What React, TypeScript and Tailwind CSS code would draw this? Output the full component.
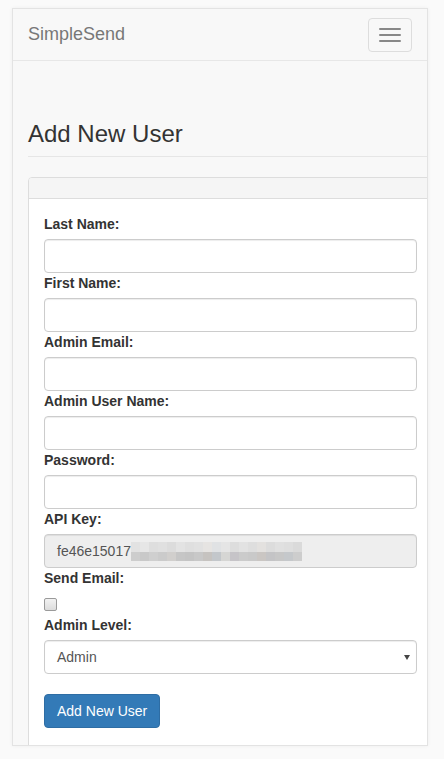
import React from 'react';

const fields = ['Last Name:', 'First Name:', 'Admin Email:', 'Admin User Name:', 'Password:'];

// pixelated (redacted) part of the key
const blurTop = [
  'bg-[#e2e2e2]', 'bg-[#e6e6e6]', 'bg-[#dedede]', 'bg-[#e0e0e0]', 'bg-[#dcdcdc]', 'bg-[#e3e3e3]',
  'bg-[#dfdfdf]', 'bg-[#e1e1e1]', 'bg-[#e6e4e2]', 'bg-[#e0e2e4]', 'bg-[#e5e5e5]', 'bg-[#dddddd]',
  'bg-[#e2e2e2]', 'bg-[#dedede]', 'bg-[#e3e1df]', 'bg-[#dcdcdc]', 'bg-[#e0e0e0]', 'bg-[#dedede]', 'bg-[#dadada]',
];
const blurBottom = [
  'bg-[#cdcdcd]', 'bg-[#c9c9c9]', 'bg-[#cfcfcf]', 'bg-[#cbcbcb]', 'bg-[#d1cfcd]', 'bg-[#c6c6c6]',
  'bg-[#c4c4c4]', 'bg-[#c8c8c8]', 'bg-[#c6c3c0]', 'bg-[#c3c7cb]', 'bg-[#d6d6d4]', 'bg-[#c6c4c8]',
  'bg-[#cbcbcb]', 'bg-[#c9c9c9]', 'bg-[#cac6c3]', 'bg-[#c4c4c6]', 'bg-[#c7c7c7]', 'bg-[#c5c8cb]', 'bg-[#cdcdcd]',
];

const Label: React.FC<{ text: string }> = ({ text }) => (
  <label className="block text-[14px] leading-[20px] font-bold text-[#333] mb-[5px]">{text}</label>
);

const TextInput: React.FC = () => (
  <div className="h-[34px] w-full bg-white border border-[#ccc] rounded-[4px] shadow-[inset_0_1px_1px_rgba(0,0,0,0.075)]" />
);

export default function App() {
  return (
    <div className="min-h-screen bg-[#fafafa] pt-2 pl-3 font-['Liberation_Sans',Arial,sans-serif]">
      <div className="w-[416px] h-[738px] border border-[#e3e3e3] bg-[#f8f8f8] overflow-hidden shadow-[0_0_4px_rgba(0,0,0,0.05)]">
        {/* Navbar */}
        <div className="h-[52px] border-b border-[#e7e7e7] flex items-center justify-between pl-[15px] pr-[15px]">
          <span className="text-[18px] text-[#777]">SimpleSend</span>
          <button className="w-[44px] h-[34px] border border-[#ddd] rounded-[4px] flex flex-col items-center justify-center gap-[4px]">
            <span className="block w-[22px] h-[2px] bg-[#888] rounded-[1px]" />
            <span className="block w-[22px] h-[2px] bg-[#888] rounded-[1px]" />
            <span className="block w-[22px] h-[2px] bg-[#888] rounded-[1px]" />
          </button>
        </div>

        <div className="pl-[15px] w-[420px] shrink-0">
          {/* Page header */}
          <div className="mt-[60px] pb-[9px] border-b border-[#e6e6e6]">
            <h1 className="text-[24px] leading-[26.4px] text-[#333]">Add New User</h1>
          </div>

          {/* Panel */}
          <div className="mt-[20px] w-[405px] border border-[#ddd] rounded-[4px] bg-white">
            <div className="h-[21px] bg-[#f5f5f5] border-b border-[#ddd] rounded-t-[3px]" />
            <div className="pt-[15px] px-[15px] pb-[40px]">
              {fields.map((f) => (
                <div key={f}>
                  <Label text={f} />
                  <TextInput />
                </div>
              ))}

              <Label text="API Key:" />
              <div className="h-[34px] w-full bg-[#eee] border border-[#ccc] rounded-[4px] flex items-center px-[12px] text-[14px] text-[#555] shadow-[inset_0_1px_1px_rgba(0,0,0,0.075)]">
                <span>fe46e15017</span>
                <div className="flex flex-col">
                  <div className="flex">
                    {blurTop.map((c, i) => (
                      <span key={i} className={`block w-[9px] h-[10px] ${c}`} />
                    ))}
                  </div>
                  <div className="flex">
                    {blurBottom.map((c, i) => (
                      <span key={i} className={`block w-[9px] h-[9px] ${c}`} />
                    ))}
                  </div>
                </div>
              </div>

              <Label text="Send Email:" />
              <div className="h-[22px] pt-[5px]">
                <span className="block w-[13px] h-[13px] border border-[#9a9a9a] rounded-[2px] bg-gradient-to-b from-[#f2f2f2] to-[#dcdcdc]" />
              </div>

              <Label text="Admin Level:" />
              <div className="relative h-[34px] w-full bg-white border border-[#ccc] rounded-[4px] flex items-center px-[12px] text-[14px] text-[#555] shadow-[inset_0_1px_1px_rgba(0,0,0,0.075)]">
                <span>Admin</span>
                <svg className="absolute right-[6px] top-[14px]" width="6" height="5" viewBox="0 0 6 5">
                  <path d="M0 0 L6 0 L3 5 Z" fill="#444" />
                </svg>
              </div>

              <button className="mt-[20px] h-[34px] px-[12px] bg-[#337ab7] border border-[#2e6da4] rounded-[4px] text-white text-[14px]">
                Add New User
              </button>
            </div>
          </div>
        </div>
      </div>
    </div>
  );
}
